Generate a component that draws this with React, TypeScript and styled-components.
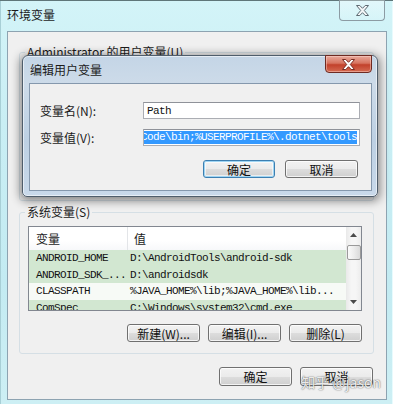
import styled, { createGlobalStyle } from 'styled-components';

const CJK = `"Noto Sans CJK SC", "Microsoft YaHei", sans-serif`;
const MONO = `"Liberation Mono", "Noto Sans CJK SC", monospace`;

const GlobalStyle = createGlobalStyle`
  html, body {
    margin: 0;
    padding: 0;
  }
  body {
    width: 393px;
    height: 404px;
    overflow: hidden;
    font-family: ${CJK};
    color: #111;
  }
`;

type VarRow = { name: string; value: string; plain?: boolean };

const systemVars: VarRow[] = [
  { name: 'ANDROID_HOME', value: 'D:\\AndroidTools\\android-sdk' },
  { name: 'ANDROID_SDK_...', value: 'D:\\androidsdk' },
  { name: 'CLASSPATH', value: '%JAVA_HOME%\\lib;%JAVA_HOME%\\lib...', plain: true },
  { name: 'ComSpec', value: 'C:\\Windows\\system32\\cmd.exe' },
];

const userVars: VarRow[] = [
  { name: 'Path', value: 'C:\\Users\\Administrator\\AppData...' },
  { name: 'TEMP', value: '%USERPROFILE%\\AppData\\Local\\Temp' },
  { name: 'TMP', value: '%USERPROFILE%\\AppData\\Local\\Temp' },
];

function CloseGlyph({ fill, stroke }: { fill: string; stroke: string }) {
  return (
    <svg width="13" height="11" viewBox="0 0 13 11">
      <polygon
        points="0.5,0.5 3.8,0.5 6.5,3.3 9.2,0.5 12.5,0.5 8.3,5.5 12.5,10.5 9.2,10.5 6.5,7.7 3.8,10.5 0.5,10.5 4.7,5.5"
        fill={fill}
        stroke={stroke}
        strokeWidth="1"
        strokeLinejoin="round"
      />
    </svg>
  );
}

function Arrow({ down }: { down?: boolean }) {
  return (
    <svg width="7" height="4" viewBox="0 0 7 4">
      <polygon points={down ? '0,0 7,0 3.5,4' : '0,4 7,4 3.5,0'} fill="#4b4b4b" />
    </svg>
  );
}

function VarList({ rows, height }: { rows: VarRow[]; height: number }) {
  return (
    <ListBox style={{ height }}>
      <Table>
        <HeaderRow>
          <HeaderCell>变量</HeaderCell>
          <HeaderCell $last>值</HeaderCell>
        </HeaderRow>
        {rows.map((r) => (
          <Row key={r.name} $plain={r.plain}>
            <NameCell>{r.name}</NameCell>
            <ValueCell>{r.value}</ValueCell>
          </Row>
        ))}
      </Table>
      <ScrollBar>
        <ArrowBox>
          <Arrow />
        </ArrowBox>
        <Thumb />
        <Track />
        <ArrowBox>
          <Arrow down />
        </ArrowBox>
      </ScrollBar>
    </ListBox>
  );
}

export default function App() {
  return (
    <>
      <GlobalStyle />
      <Desktop>
        <TitleBar>
          <TitleText>环境变量</TitleText>
          <OuterClose>
            <CloseGlyph fill="#f4f7f8" stroke="#5d6a72" />
          </OuterClose>
        </TitleBar>

        <Client>
          <Group>
            <Legend>Administrator 的用户变量(U)</Legend>
            <VarList rows={userVars} height={92} />
            <ButtonRow>
              <Button>新建(N)...</Button>
              <Button>编辑(E)...</Button>
              <Button>删除(D)</Button>
            </ButtonRow>
          </Group>

          <Group $gap>
            <Legend>系统变量(S)</Legend>
            <VarList rows={systemVars} height={85} />
            <ButtonRow>
              <Button>新建(W)...</Button>
              <Button>编辑(I)...</Button>
              <Button>删除(L)</Button>
            </ButtonRow>
          </Group>

          <FooterRow>
            <Button $tall>确定</Button>
            <Button $tall>取消</Button>
          </FooterRow>
        </Client>

        <EditDialog>
          <DialogTitleBar>
            <DialogTitle>编辑用户变量</DialogTitle>
            <RedClose>
              <CloseGlyph fill="#ffffff" stroke="#7a2b22" />
            </RedClose>
          </DialogTitleBar>
          <DialogClient>
            <FieldGrid>
              <FieldLabel>变量名(N):</FieldLabel>
              <TextBox>Path</TextBox>
              <FieldLabel>变量值(V):</FieldLabel>
              <TextBox $scrolled>
                <Selected>
                  C:\Program Files\Microsoft VS Code\bin;%USERPROFILE%\.dotnet\tools
                </Selected>
              </TextBox>
            </FieldGrid>
            <DialogButtons>
              <Button $default>确定</Button>
              <Button>取消</Button>
            </DialogButtons>
          </DialogClient>
        </EditDialog>

        <Watermark>知乎 @jason</Watermark>
      </Desktop>
    </>
  );
}

const Desktop = styled.div`
  position: relative;
  width: 393px;
  height: 404px;
  box-sizing: border-box;
  overflow: hidden;
  display: flex;
  flex-direction: column;
  padding: 0 6px 4px 7px;
  background: linear-gradient(
    to bottom,
    #d3f4f8 0%,
    #c9eef4 30%,
    #c3ebf2 70%,
    #cdeff4 100%
  );
  box-shadow: inset 0 1px 0 #5f7679, inset -1px 0 0 #e8fbfd, inset 1px 0 0 #a8cfd6;
`;

const TitleBar = styled.div`
  height: 31px;
  flex-shrink: 0;
  display: flex;
  justify-content: space-between;
  align-items: flex-start;
`;

const TitleText = styled.div`
  margin-top: 8px;
  font-size: 12px;
  line-height: 14px;
  color: #1b1b1b;
`;

const OuterClose = styled.div`
  width: 46px;
  height: 21px;
  margin-right: 2px;
  box-sizing: border-box;
  display: flex;
  align-items: center;
  justify-content: center;
  border: 1px solid #8c9ba3;
  border-top: none;
  border-radius: 0 0 4px 4px;
  background: linear-gradient(to bottom, rgba(255, 255, 255, 0.35), rgba(255, 255, 255, 0.1));
`;

const Client = styled.div`
  flex: 1;
  display: flex;
  flex-direction: column;
  box-sizing: border-box;
  padding: 13px 12px 12px 11px;
  background: #f0f0f0;
  border: 1px solid #8da3b1;
`;

const Group = styled.fieldset<{ $gap?: boolean }>`
  margin: ${(p) => (p.$gap ? '4px' : '0')} 0 0 0;
  min-width: 0;
  padding: 7px 11px 11px 8px;
  border: 1px solid #d5dfe5;
  border-radius: 3px;
  display: flex;
  flex-direction: column;
`;

const Legend = styled.legend`
  margin-left: -3px;
  padding: 0 2px;
  font-size: 12px;
  line-height: 14px;
  color: #1b1b1b;
`;

const ListBox = styled.div`
  display: flex;
  box-sizing: border-box;
  border: 1px solid #828790;
  background: #ffffff;
  overflow: hidden;
`;

const Table = styled.div`
  flex: 1;
  min-width: 0;
  display: flex;
  flex-direction: column;
`;

const HeaderRow = styled.div`
  display: grid;
  grid-template-columns: 99px 1fr;
  height: 23px;
  flex-shrink: 0;
  background: linear-gradient(to bottom, #ffffff 0%, #ffffff 60%, #f7f8fa 100%);
`;

const HeaderCell = styled.div<{ $last?: boolean }>`
  display: flex;
  align-items: center;
  padding-left: ${(p) => (p.$last ? '6px' : '7px')};
  font-size: 12px;
  color: #1b1b1b;
  border-right: ${(p) => (p.$last ? 'none' : '1px solid #e3e5e8')};
`;

const Row = styled.div<{ $plain?: boolean }>`
  display: grid;
  grid-template-columns: 99px 1fr;
  height: 16.5px;
  flex-shrink: 0;
  align-items: center;
  background: ${(p) => (p.$plain ? '#f7faf6' : '#d2e7d1')};
  font-family: ${MONO};
  font-size: 11px;
  letter-spacing: -0.6px;
  color: #111;
  white-space: nowrap;
  overflow: hidden;
`;

const NameCell = styled.div`
  padding-left: 7px;
  overflow: hidden;
`;

const ValueCell = styled.div`
  padding-left: 2px;
  overflow: hidden;
`;

const ScrollBar = styled.div`
  width: 15px;
  flex-shrink: 0;
  display: flex;
  flex-direction: column;
  align-items: center;
  background: linear-gradient(to right, #e9e9e9, #f6f6f6 35%, #f6f6f6 65%, #ececec);
`;

const ArrowBox = styled.div`
  width: 15px;
  height: 16px;
  flex-shrink: 0;
  display: flex;
  align-items: center;
  justify-content: center;
`;

const Thumb = styled.div`
  width: 14px;
  height: 15px;
  margin-top: 2px;
  flex-shrink: 0;
  box-sizing: border-box;
  border: 1px solid #9a9a9a;
  border-radius: 2px;
  background: linear-gradient(to right, #fbfbfb, #ececec 50%, #dadada);
`;

const Track = styled.div`
  flex: 1;
`;

const ButtonRow = styled.div`
  margin-top: 13px;
  display: flex;
  justify-content: flex-end;
  gap: 8px;
`;

const FooterRow = styled.div`
  margin-top: 13px;
  margin-right: 1px;
  display: flex;
  justify-content: flex-end;
  gap: 8px;
`;

const Button = styled.div<{ $default?: boolean; $tall?: boolean }>`
  width: ${(p) => (p.$default ? '72px' : '73px')};
  height: ${(p) => (p.$tall ? '19px' : '18px')};
  box-sizing: border-box;
  display: flex;
  align-items: center;
  justify-content: center;
  font-size: 12px;
  color: #111;
  border: 1px solid ${(p) => (p.$default ? '#3c7fb1' : '#707070')};
  border-radius: 3px;
  background: linear-gradient(
    to bottom,
    #f2f2f2 0%,
    #ebebeb 50%,
    #dddddd 51%,
    #cfcfcf 100%
  );
  box-shadow: ${(p) =>
    p.$default
      ? 'inset 0 0 0 1px #9fd5f3, inset 0 0 0 2px rgba(255,255,255,0.6)'
      : 'inset 0 0 0 1px rgba(255,255,255,0.75)'};
`;

const EditDialog = styled.div`
  position: absolute;
  left: 22px;
  top: 55px;
  width: 356px;
  height: 142px;
  box-sizing: border-box;
  display: flex;
  flex-direction: column;
  padding: 0 5px 5px 6px;
  border: 1px solid #4f5d6b;
  border-radius: 6px 6px 5px 5px;
  background: linear-gradient(
    to bottom,
    #c4d5e6 0%,
    #cddbe9 20%,
    #bdd0e3 60%,
    #c9d9ea 100%
  );
  box-shadow: 0 2px 10px 2px rgba(0, 0, 0, 0.45), inset 0 0 0 1px rgba(255, 255, 255, 0.55);
`;

const DialogTitleBar = styled.div`
  height: 27px;
  flex-shrink: 0;
  display: flex;
  justify-content: space-between;
  align-items: flex-start;
`;

const DialogTitle = styled.div`
  margin: 7px 0 0 1px;
  font-size: 12px;
  line-height: 14px;
  color: #1b1b1b;
`;

const RedClose = styled.div`
  width: 47px;
  height: 18px;
  margin-top: -1px;
  box-sizing: border-box;
  display: flex;
  align-items: center;
  justify-content: center;
  border: 1px solid #6e2a22;
  border-radius: 0 0 4px 4px;
  background: linear-gradient(
    to bottom,
    #e8a99c 0%,
    #d7735f 45%,
    #c2412b 55%,
    #d46a52 100%
  );
  box-shadow: inset 0 0 0 1px rgba(255, 220, 210, 0.45);
`;

const DialogClient = styled.div`
  flex: 1;
  display: flex;
  flex-direction: column;
  box-sizing: border-box;
  padding: 18px 11px 12px 10px;
  background: #f0f0f0;
  border: 1px solid #8598ad;
`;

const FieldGrid = styled.div`
  display: grid;
  grid-template-columns: 103px 1fr;
  grid-auto-rows: 17px;
  row-gap: 10px;
  align-items: center;
`;

const FieldLabel = styled.div`
  font-size: 12px;
  line-height: 14px;
  color: #1b1b1b;
`;

const TextBox = styled.div<{ $scrolled?: boolean }>`
  height: 17px;
  box-sizing: border-box;
  display: flex;
  align-items: center;
  justify-content: ${(p) => (p.$scrolled ? 'flex-end' : 'flex-start')};
  padding: ${(p) => (p.$scrolled ? '1px 2px 1px 1px' : '0 3px')};
  overflow: hidden;
  border: 1px solid #abadb3;
  border-top-color: #8f9299;
  background: #ffffff;
  font-family: ${MONO};
  font-size: 11px;
  letter-spacing: -0.6px;
  color: #111;
  white-space: nowrap;
`;

const Selected = styled.span`
  flex-shrink: 0;
  height: 13px;
  line-height: 13px;
  background: #3399ff;
  color: #ffffff;
`;

const DialogButtons = styled.div`
  margin-top: 14px;
  padding-right: 2px;
  display: flex;
  justify-content: flex-end;
  gap: 10px;
`;

const Watermark = styled.div`
  position: absolute;
  right: 12px;
  bottom: 14px;
  font-family: ${CJK};
  font-size: 14px;
  line-height: 16px;
  color: rgba(255, 255, 255, 0.9);
  text-shadow: 0 0 1px rgba(0, 0, 0, 0.55), 0 0 2px rgba(0, 0, 0, 0.35);
  pointer-events: none;
`;
